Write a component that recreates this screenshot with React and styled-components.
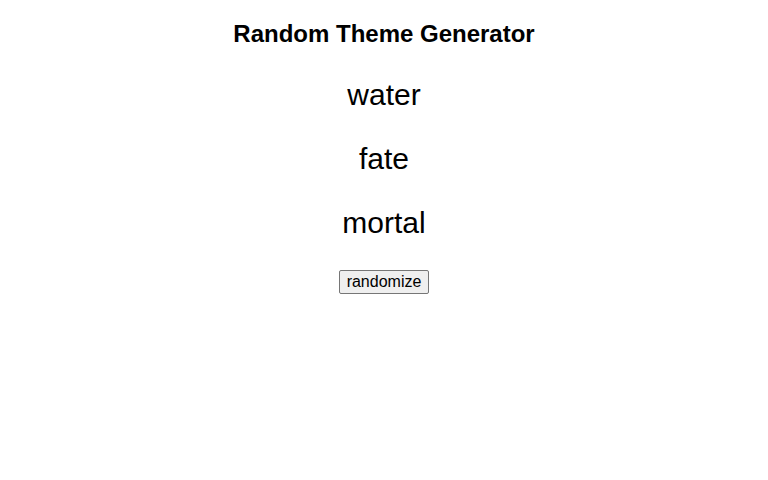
import styled, { createGlobalStyle } from 'styled-components'
import { useState } from 'react'

const GlobalStyle = createGlobalStyle`
    body {
        margin: 0;
        font-family: "Liberation Sans", Arial, sans-serif;
        color: #000;
        background: #fff;
    }
`

const words = ['water', 'fate', 'mortal', 'fire', 'memory', 'ash', 'journey', 'silence', 'storm', 'light']

const pick = () => {
    const pool = [...words]
    const out = []
    for (let i = 0; i < 3; i++) {
        out.push(pool.splice(Math.floor(Math.random() * pool.length), 1)[0])
    }
    return out
}

function App() {
    const [theme, setTheme] = useState(['water', 'fate', 'mortal'])

    return (
        <Page>
            <GlobalStyle />
            <Title>Random Theme Generator</Title>
            {theme.map(word => <Word key={word}>{word}</Word>)}
            <RandomizeButton onClick={() => setTheme(pick())}>randomize</RandomizeButton>
        </Page>
    )
}

export default App

const Page = styled.div`
    padding: 0 8px 8px;
    text-align: center;
`

const Title = styled.h2`
    font-size: 24px;
    font-weight: 700;
    margin: 20px 0;
`

const Word = styled.p`
    font-size: 30px;
    margin: 30px 0;
`

const RandomizeButton = styled.button`
    font-family: "Liberation Sans", Arial, sans-serif;
    font-size: 16px;
    color: #000;
    padding: 2px 7px;
    background: #efefef;
    border: 1px solid #767676;
    border-radius: 2px;
    cursor: pointer;
`
